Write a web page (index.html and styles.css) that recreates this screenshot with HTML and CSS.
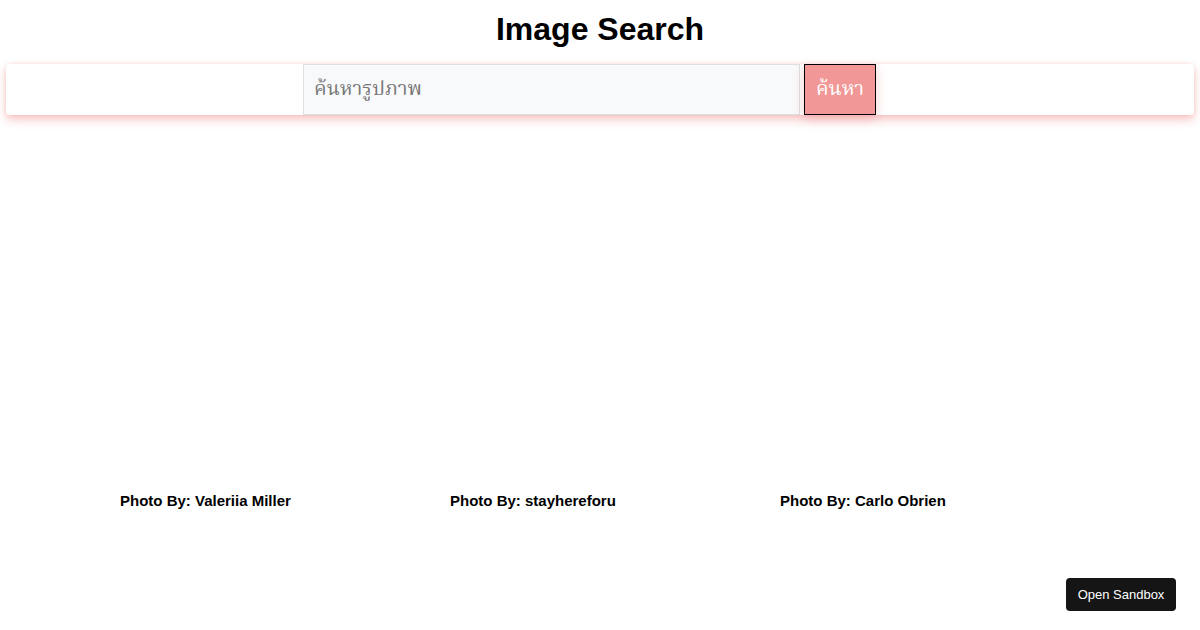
FILE: index.html
```html
<!DOCTYPE html>
<html lang="th">
  <head>
    <meta charset="UTF-8" />
    <meta name="viewport" content="width=device-width, initial-scale=1.0" />
    <title>Image Search</title>
    <link rel="stylesheet" href="styles.css">
  </head>
  <body>
    <h1 class="title">Image Search</h1>

    <form class="search-bar" onsubmit="return false">
      <input class="search-input" type="text" placeholder="ค้นหารูปภาพ" />
      <button class="search-btn" type="submit">ค้นหา</button>
    </form>

    <div class="gallery">
      <div class="photo">
        <div class="photo-img"></div>
        <p class="photo-by">Photo By: Valeriia Miller</p>
      </div>
      <div class="photo">
        <div class="photo-img"></div>
        <p class="photo-by">Photo By: stayhereforu</p>
      </div>
      <div class="photo">
        <div class="photo-img"></div>
        <p class="photo-by">Photo By: Carlo Obrien</p>
      </div>
    </div>

    <a class="sandbox-btn" href="#">Open Sandbox</a>
  </body>
</html>
```

FILE: styles.css
```css
body {
  margin: 0;
  background: #fff;
  font-family: "Liberation Sans", Arial, sans-serif;
  color: #000;
}

.title {
  margin: 0;
  padding-top: 11px;
  height: 64px;
  box-sizing: border-box;
  text-align: center;
  font-size: 32px;
  font-weight: 700;
}

.search-bar {
  width: 99%;
  margin: 0 auto;
  height: 51px;
  display: flex;
  justify-content: center;
  align-items: stretch;
  gap: 4px;
  background: #fff;
  border-radius: 4px;
  box-shadow: 0 5px 10px rgba(238, 120, 120, 0.4), 0 0 4px rgba(240, 150, 150, 0.25);
}

.search-input {
  width: 497px;
  box-sizing: border-box;
  margin: 0;
  padding: 0 10px;
  border: 1px solid #dcdfe3;
  background: #f8f9fa;
  font-family: "Noto Serif Thai", "Norasi", "Liberation Serif", serif;
  font-size: 20px;
  color: #333;
  outline: none;
}

.search-input::placeholder {
  color: #777;
}

.search-btn {
  width: 72px;
  margin: 0 21px 0 0;
  padding: 0;
  border: 1px solid #000;
  background: #f29797;
  color: #fff;
  font-family: "Noto Serif Thai", "Norasi", "Liberation Serif", serif;
  font-size: 20px;
  box-shadow: 0 4px 10px rgba(240, 130, 130, 0.4);
  cursor: pointer;
}

.gallery {
  display: grid;
  grid-template-columns: repeat(3, 330px);
  padding-left: 120px;
}

.photo-img {
  height: 377px;
}

.photo-by {
  margin: 0;
  font-size: 15px;
  font-weight: 700;
}

.sandbox-btn {
  position: fixed;
  right: 24px;
  bottom: 19px;
  width: 110px;
  height: 33px;
  display: flex;
  align-items: center;
  justify-content: center;
  background: #151515;
  color: #fff;
  border-radius: 4px;
  font-size: 13px;
  text-decoration: none;
}
```
